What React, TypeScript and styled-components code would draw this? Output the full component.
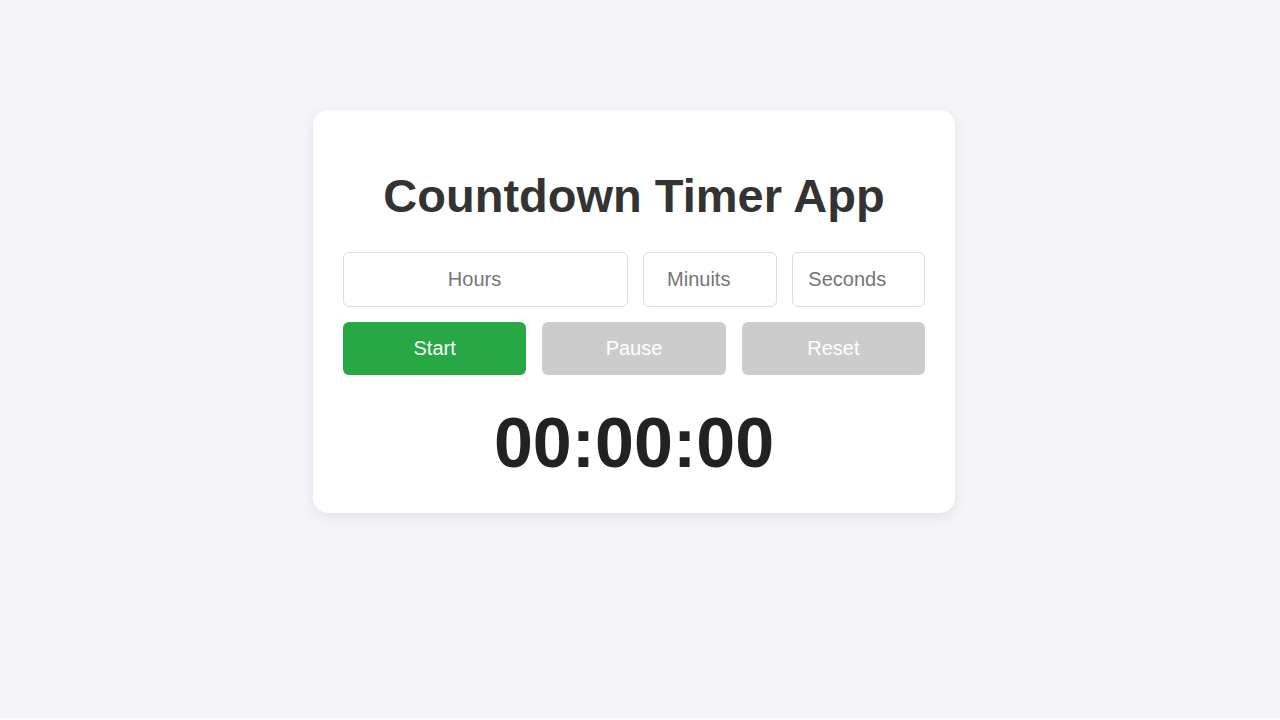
import styled, { createGlobalStyle } from "styled-components";

const GlobalStyle = createGlobalStyle`
  * {
    box-sizing: border-box;
  }

  body {
    margin: 0;
    background-color: #ffffff;
    font-family: "Liberation Sans", Arial, sans-serif;
  }
`;

const Page = styled.main`
  height: 718px;
  display: flex;
  justify-content: center;
  align-items: flex-start;
  padding: 110px 12px 0 0;
  background-color: #f4f4f9;
`;

const Card = styled.section`
  width: 642px;
  padding: 30px;
  background-color: #ffffff;
  border-radius: 15px;
  box-shadow: 0 4px 14px rgba(0, 0, 0, 0.08);
  text-align: center;
`;

const Title = styled.h1`
  margin: 28px 0 29px;
  font-size: 47px;
  font-weight: bold;
  line-height: normal;
  color: #333333;
`;

const InputRow = styled.div`
  display: grid;
  grid-template-columns: 285px 1fr 1fr;
  gap: 15px;
  margin-bottom: 15px;
`;

const TimeInput = styled.input`
  width: 100%;
  height: 55px;
  padding: 0 17px 0 10px;
  border: 1px solid #dddddd;
  border-radius: 6px;
  font-family: inherit;
  font-size: 20px;
  text-align: center;
  color: #333333;
  outline: none;

  &::placeholder {
    color: #757575;
  }
`;

const ButtonRow = styled.div`
  display: grid;
  grid-template-columns: repeat(3, 1fr);
  gap: 16px;
`;

const ActionButton = styled.button<{ $active?: boolean }>`
  height: 53px;
  border: none;
  border-radius: 6px;
  font-family: inherit;
  font-size: 20px;
  color: #ffffff;
  background-color: ${({ $active }) => ($active ? "#28a745" : "#cccccc")};
  cursor: ${({ $active }) => ($active ? "pointer" : "not-allowed")};
`;

const Display = styled.div`
  margin-top: 28px;
  font-size: 70px;
  font-weight: bold;
  line-height: normal;
  color: #222222;
`;

const App = () => {
  return (
    <>
      <GlobalStyle />
      <Page>
        <Card>
          <Title>Countdown Timer App</Title>
          <InputRow>
            <TimeInput type="number" placeholder="Hours" />
            <TimeInput type="number" placeholder="Minuits" />
            <TimeInput type="number" placeholder="Seconds" />
          </InputRow>
          <ButtonRow>
            <ActionButton $active>Start</ActionButton>
            <ActionButton disabled>Pause</ActionButton>
            <ActionButton disabled>Reset</ActionButton>
          </ButtonRow>
          <Display>00:00:00</Display>
        </Card>
      </Page>
    </>
  );
};

export default App;
